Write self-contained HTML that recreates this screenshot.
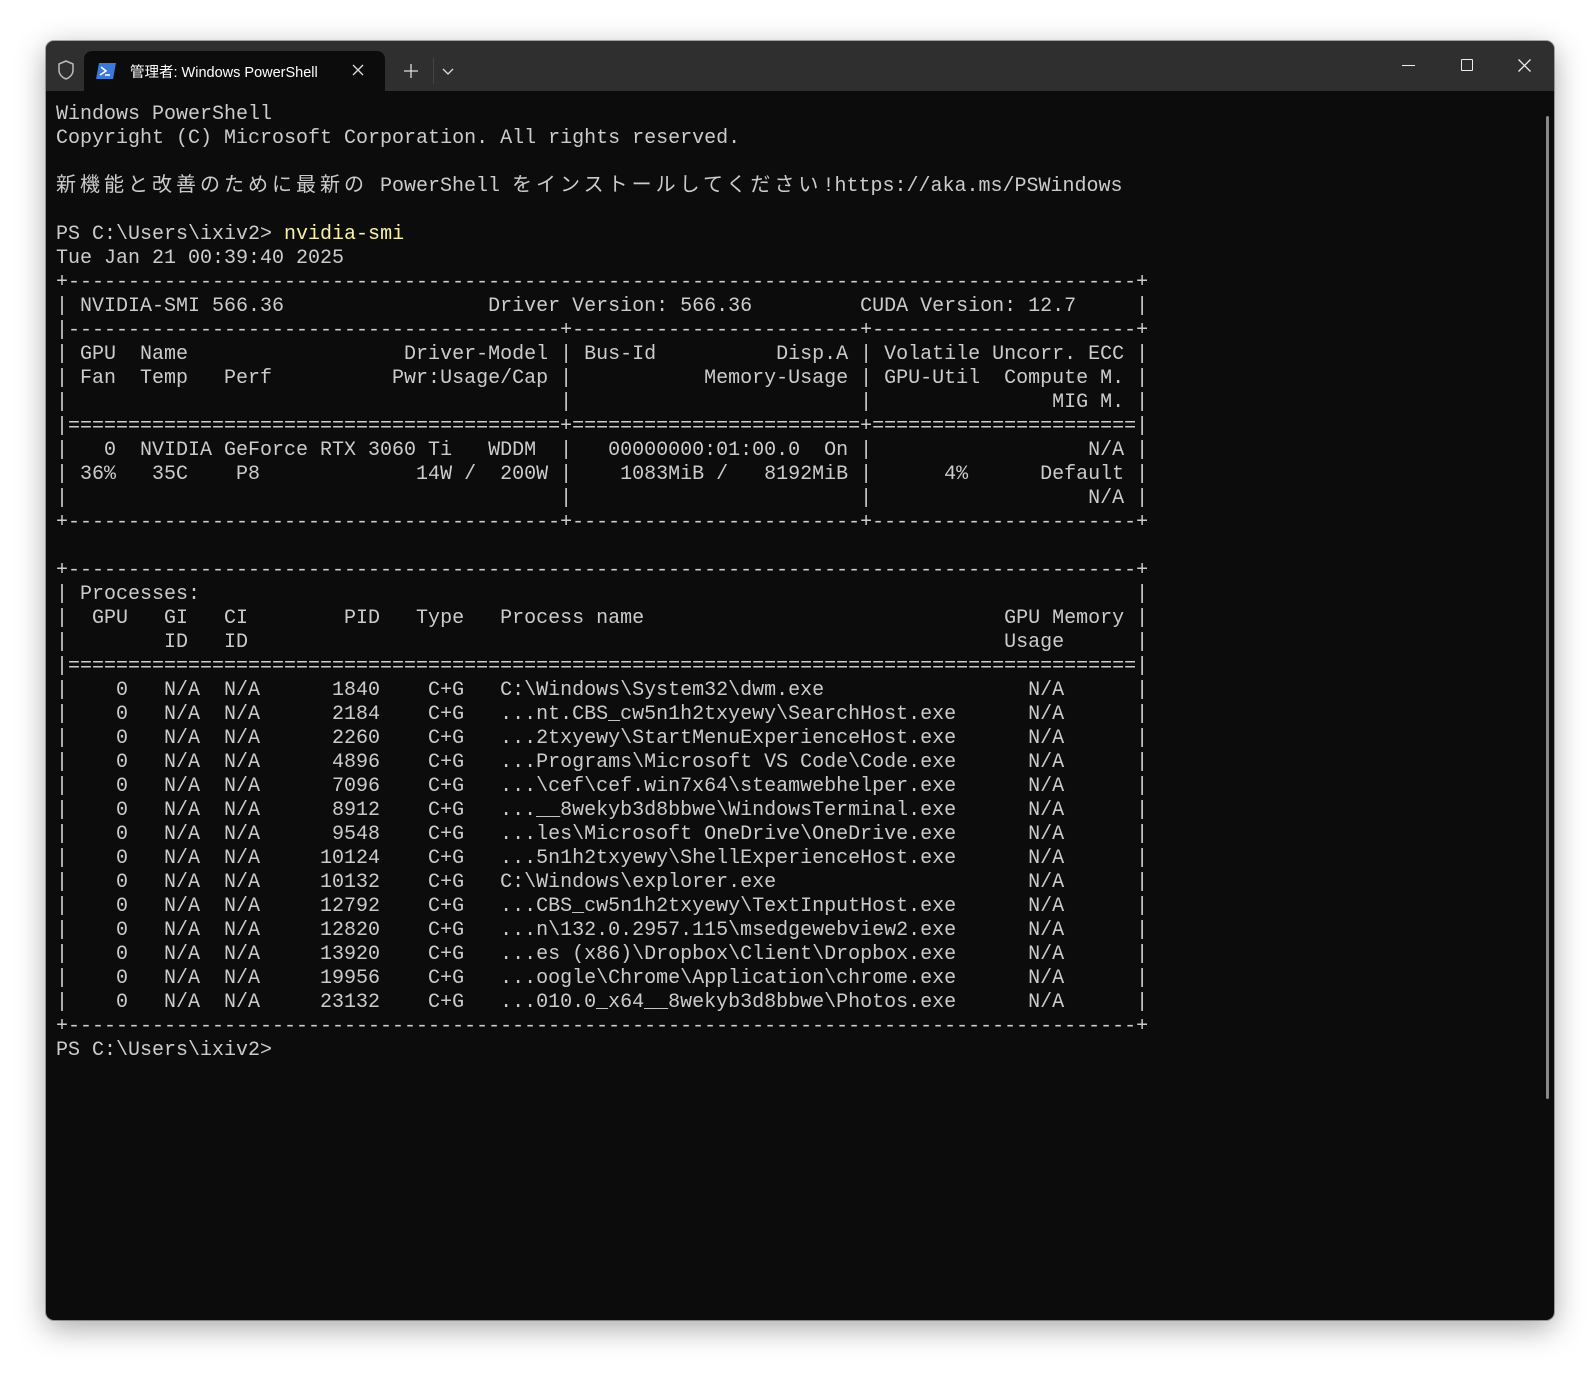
<!DOCTYPE html>
<html><head><meta charset="utf-8"><style>
html,body{margin:0;padding:0;background:#fff;width:1594px;height:1381px;overflow:hidden}
.win{position:absolute;left:46px;top:41px;width:1508px;height:1279px;background:#0c0c0c;border-radius:8px;overflow:hidden;box-shadow:0 8px 30px rgba(0,0,0,.35),0 0 0 1px rgba(0,0,0,.3)}
.bar{position:absolute;left:0;top:0;right:0;height:50px;background:#2f2f2f}
.tab{position:absolute;left:38px;top:10px;width:301px;height:40px;background:#0c0c0c;border-radius:8px 8px 0 0}
.tt{position:absolute;left:84px;top:20px;color:#fff;font:14.5px "Liberation Sans","Noto Sans CJK JP",sans-serif}
pre{position:absolute;left:10px;top:62px;margin:0;color:#cccccc;font:20px/24px "Liberation Mono","Noto Sans CJK JP",monospace}
.y{color:#f9f1a5}
.j{letter-spacing:4px}
.sb{position:absolute;left:1500px;top:75px;width:3px;height:983px;background:#8a8a8a;border-radius:2px}
</style></head><body>
<div class="win">
<div class="bar"></div>
<div class="tab"></div>
<svg style="position:absolute;left:10px;top:18px" width="20" height="22" viewBox="0 0 20 22"><path d="M10 2 L17 5 V11 C17 16 13 19 10 20 C7 19 3 16 3 11 V5 Z" fill="none" stroke="#bbb" stroke-width="1.5"/></svg>
<svg style="position:absolute;left:50px;top:22px" width="20" height="16" viewBox="0 0 20 16"><path d="M3 0 H20 L17 16 H0 Z" fill="#3b78d8"/><path d="M5 4 L10 8 L4 12" fill="none" stroke="#fff" stroke-width="1.6"/><path d="M9 12 H14" stroke="#fff" stroke-width="1.6"/></svg>
<div class="tt">管理者: Windows PowerShell</div>
<svg style="position:absolute;left:306px;top:23px" width="12" height="12"><path d="M1 1 L11 11 M11 1 L1 11" stroke="#ddd" stroke-width="1.3"/></svg>
<svg style="position:absolute;left:358px;top:23px" width="14" height="14"><path d="M7 0 V14 M0 7 H14" stroke="#ddd" stroke-width="1.3"/></svg>
<div style="position:absolute;left:387px;top:17px;width:1px;height:26px;background:#444"></div>
<svg style="position:absolute;left:396px;top:27px" width="12" height="8"><path d="M1 1 L6 6 L11 1" fill="none" stroke="#ddd" stroke-width="1.3"/></svg>
<div style="position:absolute;left:1356px;top:24px;width:13px;height:1.3px;background:#eee"></div>
<div style="position:absolute;left:1415px;top:18px;width:10px;height:10px;border:1.3px solid #eee;border-radius:1px"></div>
<svg style="position:absolute;left:1472px;top:18px" width="13" height="13"><path d="M0.5 0.5 L12.5 12.5 M12.5 0.5 L0.5 12.5" stroke="#eee" stroke-width="1.3"/></svg>
<div class="sb"></div>
<pre>Windows PowerShell
Copyright (C) Microsoft Corporation. All rights reserved.

<span class="j">新機能と改善のために最新の</span> PowerShell <span class="j">をインストールしてください</span>!https://aka.ms/PSWindows

PS C:\Users\ixiv2> <span class="y">nvidia-smi</span>
Tue Jan 21 00:39:40 2025
+-----------------------------------------------------------------------------------------+
| NVIDIA-SMI 566.36                 Driver Version: 566.36         CUDA Version: 12.7     |
|-----------------------------------------+------------------------+----------------------+
| GPU  Name                  Driver-Model | Bus-Id          Disp.A | Volatile Uncorr. ECC |
| Fan  Temp   Perf          Pwr:Usage/Cap |           Memory-Usage | GPU-Util  Compute M. |
|                                         |                        |               MIG M. |
|=========================================+========================+======================|
|   0  NVIDIA GeForce RTX 3060 Ti   WDDM  |   00000000:01:00.0  On |                  N/A |
| 36%   35C    P8             14W /  200W |    1083MiB /   8192MiB |      4%      Default |
|                                         |                        |                  N/A |
+-----------------------------------------+------------------------+----------------------+

+-----------------------------------------------------------------------------------------+
| Processes:                                                                              |
|  GPU   GI   CI        PID   Type   Process name                              GPU Memory |
|        ID   ID                                                               Usage      |
|=========================================================================================|
|    0   N/A  N/A      1840    C+G   C:\Windows\System32\dwm.exe                 N/A      |
|    0   N/A  N/A      2184    C+G   ...nt.CBS_cw5n1h2txyewy\SearchHost.exe      N/A      |
|    0   N/A  N/A      2260    C+G   ...2txyewy\StartMenuExperienceHost.exe      N/A      |
|    0   N/A  N/A      4896    C+G   ...Programs\Microsoft VS Code\Code.exe      N/A      |
|    0   N/A  N/A      7096    C+G   ...\cef\cef.win7x64\steamwebhelper.exe      N/A      |
|    0   N/A  N/A      8912    C+G   ...__8wekyb3d8bbwe\WindowsTerminal.exe      N/A      |
|    0   N/A  N/A      9548    C+G   ...les\Microsoft OneDrive\OneDrive.exe      N/A      |
|    0   N/A  N/A     10124    C+G   ...5n1h2txyewy\ShellExperienceHost.exe      N/A      |
|    0   N/A  N/A     10132    C+G   C:\Windows\explorer.exe                     N/A      |
|    0   N/A  N/A     12792    C+G   ...CBS_cw5n1h2txyewy\TextInputHost.exe      N/A      |
|    0   N/A  N/A     12820    C+G   ...n\132.0.2957.115\msedgewebview2.exe      N/A      |
|    0   N/A  N/A     13920    C+G   ...es (x86)\Dropbox\Client\Dropbox.exe      N/A      |
|    0   N/A  N/A     19956    C+G   ...oogle\Chrome\Application\chrome.exe      N/A      |
|    0   N/A  N/A     23132    C+G   ...010.0_x64__8wekyb3d8bbwe\Photos.exe      N/A      |
+-----------------------------------------------------------------------------------------+
PS C:\Users\ixiv2></pre>
</div>
</body></html>
